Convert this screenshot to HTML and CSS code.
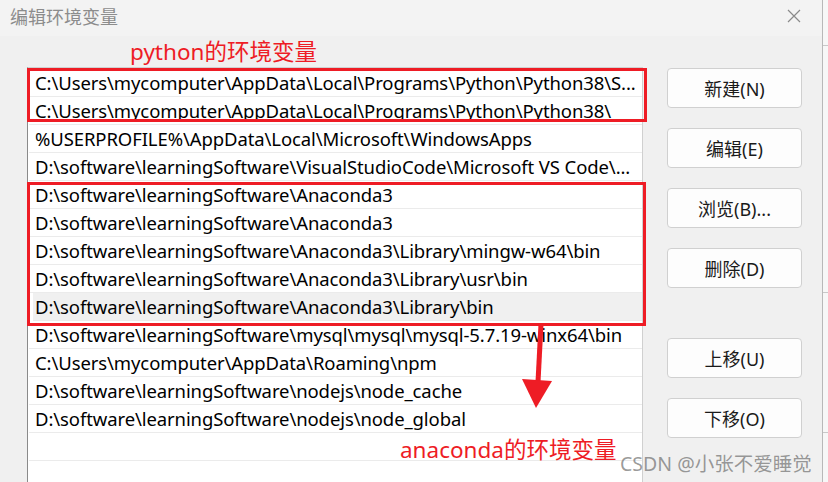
FILE: index.html
```html
<!DOCTYPE html>
<html>
<head>
<meta charset="utf-8">
<link rel="stylesheet" href="styles.css">
</head>
<body>
<div class="screen">
  <div class="window">
    <div class="titlebar">
      <span class="title">编辑环境变量</span>
      <svg class="close" width="14" height="14" viewBox="0 0 14 14"><path d="M1 1L13 13M13 1L1 13" stroke="#8a8a8a" stroke-width="1.2" fill="none"/></svg>
    </div>
    <div class="content">
      <div class="list">
        <div class="row">C:\Users\mycomputer\AppData\Local\Programs\Python\Python38\S...</div>
        <div class="row">C:\Users\mycomputer\AppData\Local\Programs\Python\Python38\</div>
        <div class="row">%USERPROFILE%\AppData\Local\Microsoft\WindowsApps</div>
        <div class="row">D:\software\learningSoftware\VisualStudioCode\Microsoft VS Code\...</div>
        <div class="row">D:\software\learningSoftware\Anaconda3</div>
        <div class="row">D:\software\learningSoftware\Anaconda3</div>
        <div class="row">D:\software\learningSoftware\Anaconda3\Library\mingw-w64\bin</div>
        <div class="row">D:\software\learningSoftware\Anaconda3\Library\usr\bin</div>
        <div class="row selected">D:\software\learningSoftware\Anaconda3\Library\bin</div>
        <div class="row">D:\software\learningSoftware\mysql\mysql\mysql-5.7.19-winx64\bin</div>
        <div class="row">C:\Users\mycomputer\AppData\Roaming\npm</div>
        <div class="row">D:\software\learningSoftware\nodejs\node_cache</div>
        <div class="row">D:\software\learningSoftware\nodejs\node_global</div>
        <div class="row"></div>
        <div class="row"></div>
      </div>
      <div class="buttons">
        <div class="group">
          <button class="btn">新建(N)</button>
          <button class="btn">编辑(E)</button>
          <button class="btn">浏览(B)...</button>
          <button class="btn">删除(D)</button>
        </div>
        <div class="group">
          <button class="btn">上移(U)</button>
          <button class="btn">下移(O)</button>
        </div>
      </div>
    </div>
    <div class="note note-python">python的环境变量</div>
    <div class="box box-python"></div>
    <div class="box box-anaconda"></div>
    <svg class="arrow" width="40" height="90" viewBox="0 0 40 90">
      <path d="M21 0 L18 58" stroke="#ee1c25" stroke-width="5" fill="none"/>
      <path d="M2 55 L32 57 L16 84 Z" fill="#ee1c25"/>
    </svg>
    <div class="note note-anaconda">anaconda的环境变量</div>
    <div class="watermark">CSDN @小张不爱睡觉</div>
  </div>
  <div class="edge">
    <div class="edge-line l1"></div>
    <div class="edge-line l2"></div>
    <div class="edge-line l3"></div>
  </div>
</div>
</body>
</html>
```
FILE: styles.css
```css
html, body {
  margin: 0;
  padding: 0;
  background: #f0f0f0;
}
body {
  font-family: "Noto Sans", "Noto Sans CJK SC", sans-serif;
  width: 828px;
  height: 482px;
  overflow: hidden;
}
.screen {
  display: flex;
  width: 828px;
  height: 482px;
}
.window {
  position: relative;
  width: 822px;
  height: 482px;
  background: #f0f0f0;
  border-right: 1px solid #b8b8b8;
  flex: none;
}
.edge {
  position: relative;
  flex: 1;
  background: #f7f7f7;
}
.edge-line {
  position: absolute;
  left: 0;
  right: 0;
  height: 1px;
  background: #c8c8c8;
}
.l1 { top: 45px; }
.l2 { top: 292px; }
.l3 { top: 432px; }
.titlebar {
  height: 36px;
  background: #f3f3f3;
  display: flex;
  align-items: center;
  justify-content: space-between;
  padding: 0 21px 0 10px;
}
.title {
  font-family: "Noto Sans CJK SC", sans-serif;
  font-size: 18px;
  color: #8c8c8c;
  margin-top: -4px;
}
.close {
  margin-top: -4px;
}
.content {
  display: flex;
  padding: 31px 0 0 27px;
}
.list {
  width: 613px;
  height: 420px;
  background: #fff;
  border-left: 1px solid #8a8a8a;
  border-right: 1px solid #d0d0d0;
  border-top: 1px solid #d0d0d0;
  padding: 1px 0 0 1px;
  overflow: hidden;
}
.row {
  height: 27px;
  border-bottom: 1px solid #ebebeb;
  line-height: 27px;
  font-size: 18.5px;
  color: #000;
  padding-left: 6px;
  white-space: nowrap;
  overflow: hidden;
  letter-spacing: -0.1px;
}
.row.selected {
  background: #f0f0f0;
  margin-left: 4px;
  padding-left: 2px;
}
.buttons {
  margin-left: 24px;
  padding-top: 1px;
  display: flex;
  flex-direction: column;
  gap: 50px;
}
.group {
  display: flex;
  flex-direction: column;
  gap: 20px;
}
.btn {
  width: 135px;
  height: 40px;
  background: #fdfdfd;
  border: 1px solid #d0d0d0;
  border-radius: 4px;
  font-family: "Noto Sans", "Noto Sans CJK SC", sans-serif;
  font-size: 18px;
  color: #1a1a1a;
  padding: 0;
}
.note {
  position: absolute;
  color: #ee1c25;
  font-family: "Noto Sans", "Noto Sans CJK SC", sans-serif;
  font-size: 22.5px;
  line-height: 26px;
}
.note-python {
  left: 130px;
  top: 39px;
}
.note-anaconda {
  left: 400px;
  top: 437px;
}
.box {
  position: absolute;
  border: 3px solid #ee1c25;
}
.box-python {
  left: 27px;
  top: 68px;
  width: 614px;
  height: 48px;
}
.box-anaconda {
  left: 27px;
  top: 182px;
  width: 613px;
  height: 138px;
}
.arrow {
  position: absolute;
  left: 520px;
  top: 324px;
}
.watermark {
  position: absolute;
  left: 620px;
  top: 448px;
  font-family: "Noto Sans", "Noto Sans CJK SC", sans-serif;
  font-size: 19.5px;
  color: rgba(110, 110, 110, 0.7);
}
```
